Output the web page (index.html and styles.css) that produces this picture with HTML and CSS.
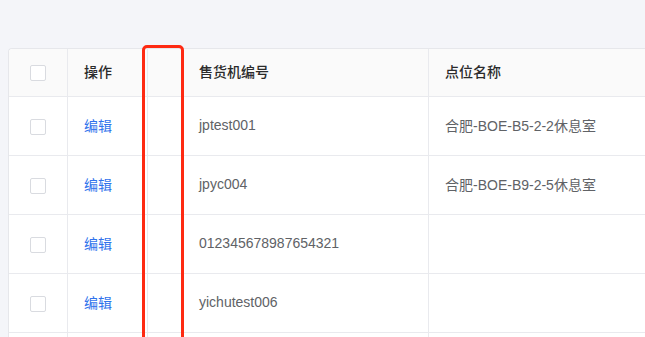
FILE: index.html
```html
<!DOCTYPE html>
<html lang="zh-CN">
<head>
<meta charset="utf-8">
<title>售货机列表</title>
<link rel="stylesheet" href="styles.css">
</head>
<body>
<main class="page">
  <div class="table-wrap">
    <table class="grid">
      <colgroup>
        <col class="c-check">
        <col class="c-op">
        <col class="c-hidden">
        <col class="c-code">
        <col class="c-place">
      </colgroup>
      <thead>
        <tr>
          <th class="center"><span class="checkbox"></span></th>
          <th>操作</th>
          <th></th>
          <th>售货机编号</th>
          <th>点位名称</th>
        </tr>
      </thead>
      <tbody>
        <tr>
          <td class="center"><span class="checkbox"></span></td>
          <td><a class="link" href="#">编辑</a></td>
          <td></td>
          <td>jptest001</td>
          <td>合肥-BOE-B5-2-2休息室</td>
        </tr>
        <tr>
          <td class="center"><span class="checkbox"></span></td>
          <td><a class="link" href="#">编辑</a></td>
          <td></td>
          <td>jpyc004</td>
          <td>合肥-BOE-B9-2-5休息室</td>
        </tr>
        <tr>
          <td class="center"><span class="checkbox"></span></td>
          <td><a class="link" href="#">编辑</a></td>
          <td></td>
          <td>012345678987654321</td>
          <td></td>
        </tr>
        <tr>
          <td class="center"><span class="checkbox"></span></td>
          <td><a class="link" href="#">编辑</a></td>
          <td></td>
          <td>yichutest006</td>
          <td></td>
        </tr>
        <tr class="filler">
          <td></td>
          <td></td>
          <td></td>
          <td></td>
          <td></td>
        </tr>
      </tbody>
    </table>
    <div class="highlight"></div>
  </div>
</main>
</body>
</html>
```

FILE: styles.css
```css
html, body {
  margin: 0;
  padding: 0;
  background: #f4f5f9;
  overflow: hidden;
}

body {
  font-family: "Liberation Sans", "Noto Sans CJK SC", sans-serif;
  font-size: 14px;
  color: #606266;
}

.page {
  padding: 48px 0 0 8px;
}

.table-wrap {
  position: relative;
  width: 760px;
}

.grid {
  width: 760px;
  border-collapse: separate;
  border-spacing: 0;
  table-layout: fixed;
  background: #fff;
  border-top: 1px solid #e6e7eb;
  border-left: 1px solid #e6e7eb;
  border-radius: 4px 0 0 0;
}

.c-check { width: 59px; }
.c-op { width: 80px; }
.c-hidden { width: 35px; }
.c-code { width: 246px; }
.c-place { width: 340px; }

.grid th,
.grid td {
  padding: 0 16px 3px;
  text-align: left;
  border-right: 1px solid #e9eaee;
  border-bottom: 1px solid #e9eaee;
  white-space: nowrap;
  overflow: hidden;
}

.grid th {
  height: 44px;
  background: #fafafa;
  color: #2b2b2b;
  font-weight: 500;
}

.grid td {
  height: 55px;
}

.grid .center {
  padding: 0;
  text-align: center;
}

.grid th:first-child {
  border-radius: 4px 0 0 0;
}

.checkbox {
  display: inline-block;
  width: 14px;
  height: 14px;
  border: 1px solid #d9dbe0;
  border-radius: 2px;
  background: #fff;
  vertical-align: middle;
}

.link {
  color: #2f72ec;
  text-decoration: none;
}

/* red marker around the narrow empty column */
.highlight {
  position: absolute;
  left: 134px;
  top: -3px;
  width: 36px;
  height: 320px;
  border: 3px solid #fe2a12;
  border-radius: 5px;
  pointer-events: none;
}
```
